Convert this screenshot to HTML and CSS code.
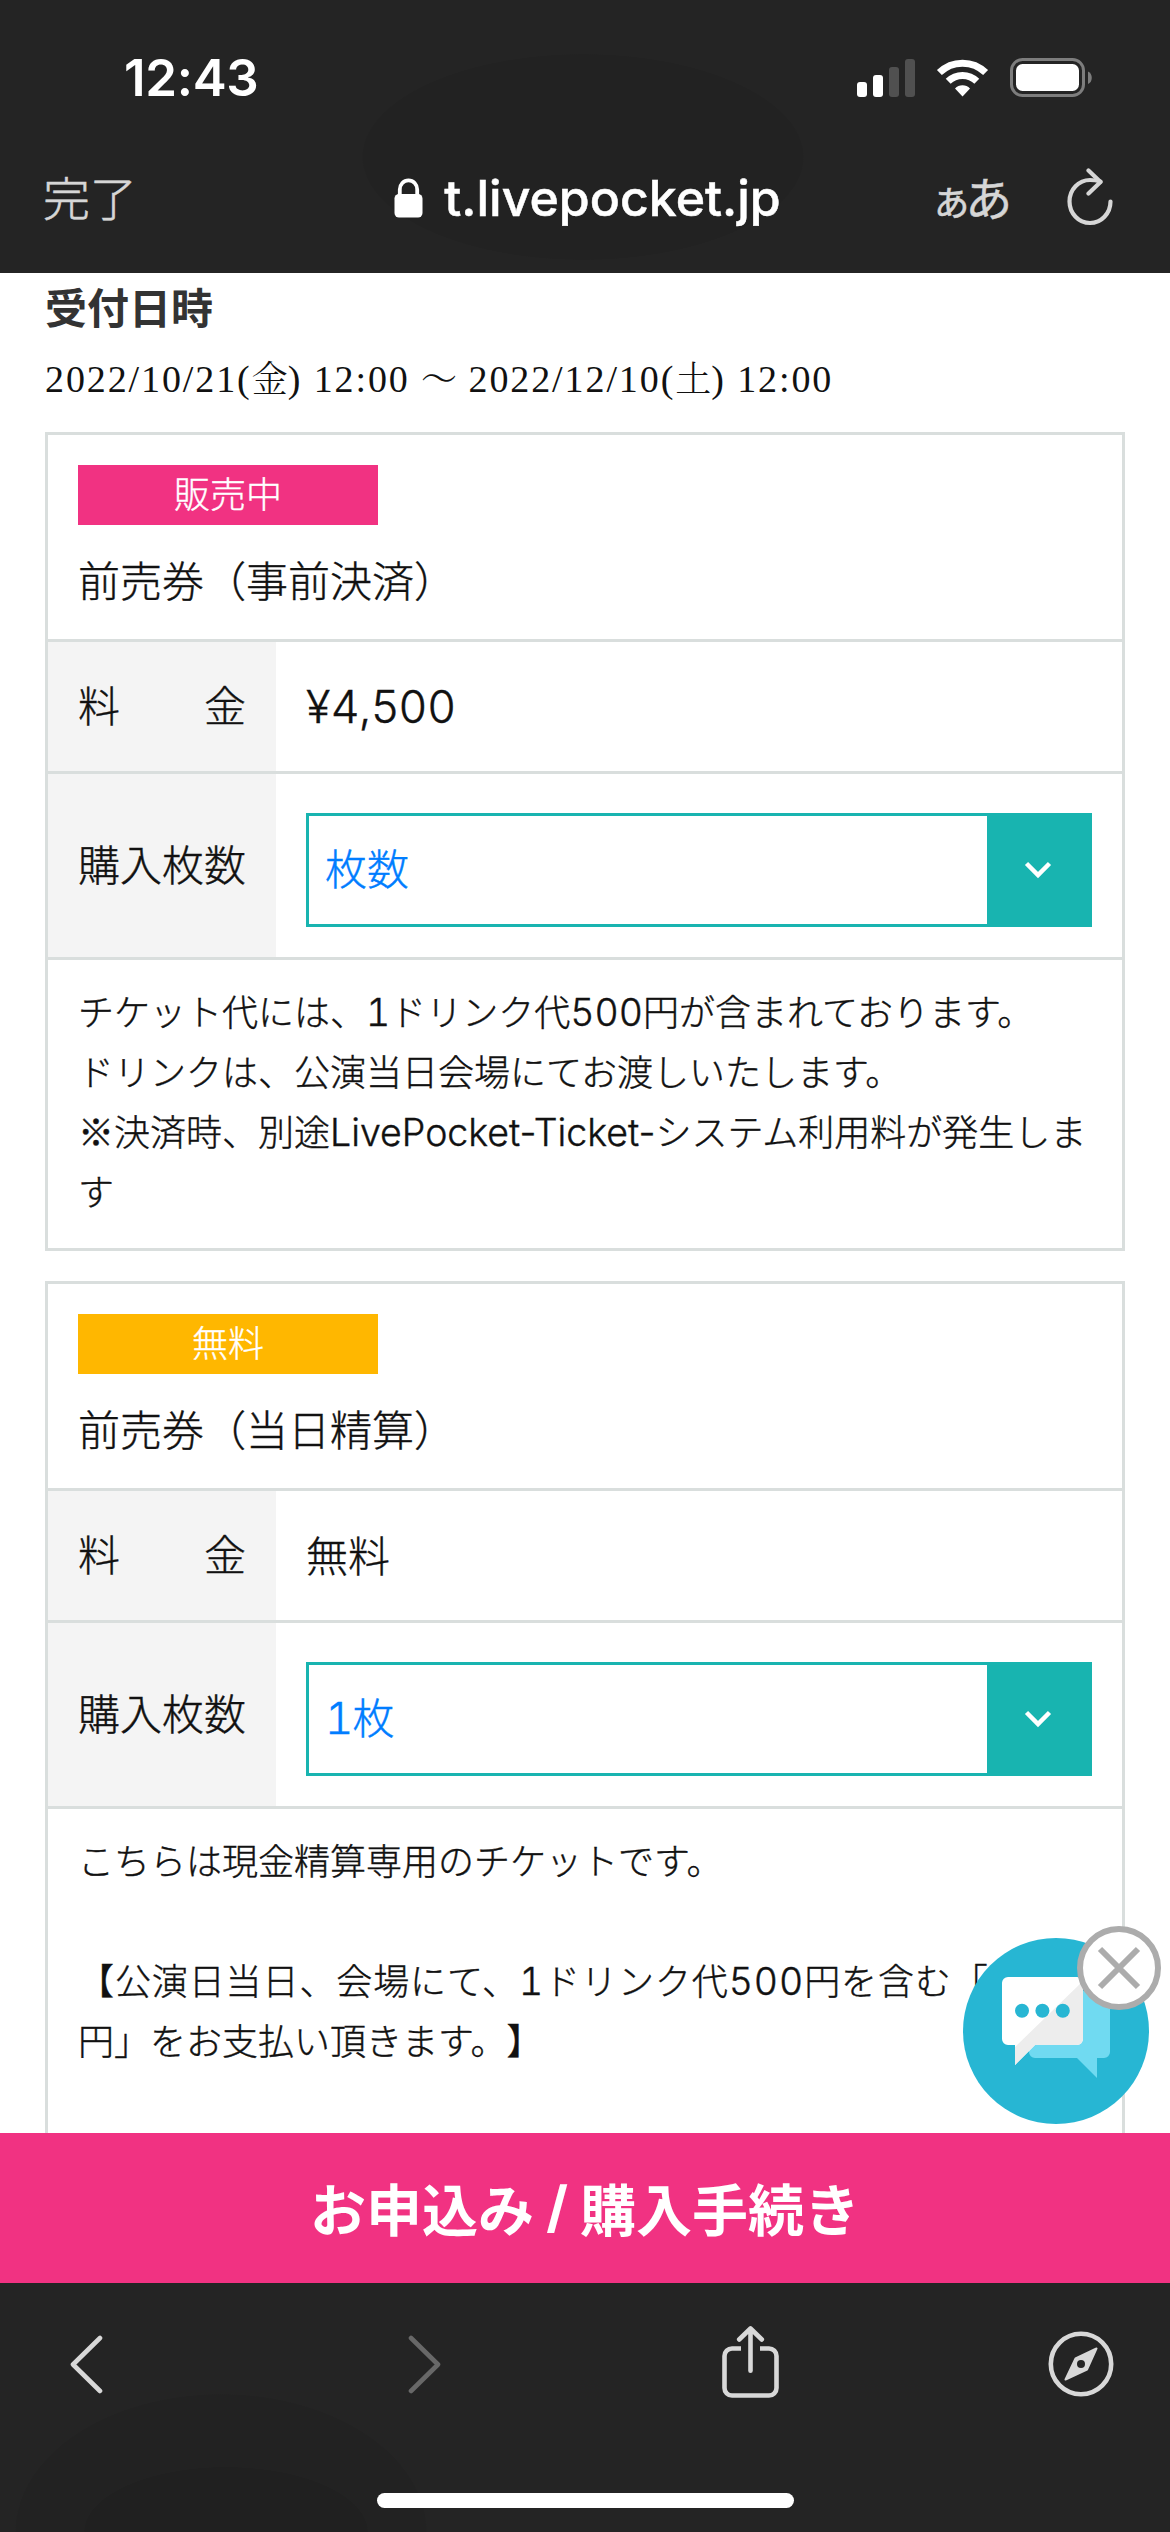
FILE: index.html
```html
<!DOCTYPE html>
<html lang="ja">
<head>
<meta charset="utf-8">
<title>t.livepocket.jp</title>
<link rel="stylesheet" href="styles.css">
</head>
<body>
<header class="browser-top">
  <div class="status-bar">
    <span class="clock">12:43</span>
    <svg class="status-icons" width="236" height="40" viewBox="0 0 236 40">
      <g fill="#fff">
        <rect x="1" y="24" width="10" height="15" rx="3"/>
        <rect x="17" y="17" width="10" height="22" rx="3"/>
        <rect x="33" y="9" width="10" height="30" rx="3" fill="#505050"/>
        <rect x="49" y="1" width="10" height="38" rx="3" fill="#505050"/>
      </g>
      <g fill="none" stroke="#fff" stroke-width="7">
        <path d="M83.4 14.6a33 33 0 0 1 46.2 0"/>
        <path d="M92.2 23.3a20.4 20.4 0 0 1 28.6 0"/>
      </g>
      <path d="M106.500 38.500L99 30.500a10.500 10.500 0 0 1 15 0z" fill="#fff"/>
      <rect x="155.500" y="1.500" width="72" height="36" rx="11" fill="none" stroke="#7d7d7d" stroke-width="3"/>
      <rect x="160" y="6" width="63" height="27" rx="6.500" fill="#fff"/>
      <path d="M232 13.500c5 1.500 5 11 0 12.500z" fill="#7d7d7d"/>
    </svg>
  </div>
  <div class="address-bar">
    <span class="done">完了</span>
    <div class="site">
      <svg width="29" height="40" viewBox="0 0 29 40">
        <path d="M5.800 18v-6.500a8.700 9.200 0 0 1 17.400 0V18" fill="none" stroke="#fff" stroke-width="3.800"/>
        <rect x="0.500" y="16" width="28" height="23.500" rx="4.500" fill="#fff"/>
      </svg>
      <span class="host">t.livepocket.jp</span>
    </div>
    <span class="reader"><span class="reader-small">ぁ</span><span>あ</span></span>
    <svg class="reload" width="48" height="58" viewBox="0 0 48 58" fill="none" stroke="#d6d6d6" stroke-width="4.200" stroke-linecap="round" stroke-linejoin="round">
      <path d="M44.500 33.500a20.500 21.500 0 1 1-20.500-21.500q5 0 10.500 1.500"/>
      <path d="M22.500 2.500l12 11.500-12 11.500"/>
    </svg>
  </div>
</header>

<main class="page">
  <h2 class="period-title">受付日時</h2>
  <p class="period">2022/10/21(<span class="day">金</span>) 12:00 <span class="tilde">〜</span> 2022/12/10(<span class="day">土</span>) 12:00</p>

  <section class="ticket">
    <div class="ticket-head">
      <span class="badge badge-sale">販売中</span>
      <h3 class="ticket-name">前売券（事前決済）</h3>
    </div>
    <div class="row">
      <div class="label"><span>料</span><span>金</span></div>
      <div class="value price">¥4,500</div>
    </div>
    <div class="row">
      <div class="label"><span>購入枚数</span></div>
      <div class="value">
        <div class="select"><span class="choice">枚数</span>
          <span class="arrow"><svg width="28" height="18" viewBox="0 0 28 18"><path d="M2.500 2.500L14 14L25.500 2.500" fill="none" stroke="#fff" stroke-width="4.500"/></svg></span>
        </div>
      </div>
    </div>
    <p class="note">チケット代には、<span class="lat">1</span>ドリンク代<span class="lat">500</span>円が含まれております。<br>ドリンクは、公演当日会場にてお渡しいたします。<br>※決済時、別途<span class="lat word">LivePocket-Ticket-</span>システム利用料が発生しま<br>す</p>
  </section>

  <section class="ticket">
    <div class="ticket-head">
      <span class="badge badge-free">無料</span>
      <h3 class="ticket-name">前売券（当日精算）</h3>
    </div>
    <div class="row">
      <div class="label"><span>料</span><span>金</span></div>
      <div class="value">無料</div>
    </div>
    <div class="row">
      <div class="label"><span>購入枚数</span></div>
      <div class="value">
        <div class="select"><span class="choice"><span class="count">1</span>枚</span>
          <span class="arrow"><svg width="28" height="18" viewBox="0 0 28 18"><path d="M2.500 2.500L14 14L25.500 2.500" fill="none" stroke="#fff" stroke-width="4.500"/></svg></span>
        </div>
      </div>
    </div>
    <p class="note note-long">こちらは現金精算専用のチケットです。<br><br><span class="spread">【公演日当日、会場にて、<span class="lat">1</span>ドリンク代<span class="lat">500</span>円を含む「</span><br>円」をお支払い頂きます。】</p>
  </section>

  <svg class="chat" width="201" height="200" viewBox="960 1925 201 200">
    <circle cx="1056" cy="2031" r="93" fill="#27b6d3"/>
    <path d="M1035 1991h69a6 6 0 0 1 6 6v55a6 6 0 0 1-6 6h-7v20l-20-20h-42a6 6 0 0 1-6-6v-55a6 6 0 0 1 6-6z" fill="#70daf1"/>
    <path d="M1008 1977h69a6 6 0 0 1 6 6v56a6 6 0 0 1-6 6h-42l-20 20v-20h-7a6 6 0 0 1-6-6v-56a6 6 0 0 1 6-6z" fill="#fff"/>
    <path d="M1083 1981v58a6 6 0 0 1-6 6h-42l-20 20v-18z" fill="#ededed"/>
    <g fill="#27b6d3"><circle cx="1022" cy="2010.700" r="7"/><circle cx="1042.400" cy="2010.700" r="7"/><circle cx="1062.800" cy="2010.700" r="7"/></g>
    <circle cx="1119" cy="1968" r="39" fill="#fff" stroke="#acacac" stroke-width="6"/>
    <path d="M1100 1949l38 38M1138 1949l-38 38" stroke="#acacac" stroke-width="6"/>
  </svg>
</main>

<div class="apply">お申込み<span class="slash">/</span>購入手続き</div>

<footer class="browser-bottom">
  <nav class="toolbar">
    <svg width="36" height="60" viewBox="0 0 36 60" fill="none" stroke="#d8d8d8" stroke-width="4.600" stroke-linecap="round" stroke-linejoin="round"><path d="M31 4L4 30.500L31 57"/></svg>
    <svg width="36" height="60" viewBox="0 0 36 60" fill="none" stroke="#686868" stroke-width="4.600" stroke-linecap="round" stroke-linejoin="round"><path d="M4 4L31 30.500L4 57"/></svg>
    <svg class="share" width="62" height="76" viewBox="0 0 62 76" fill="none" stroke="#d8d8d8" stroke-width="4.600" stroke-linecap="round" stroke-linejoin="round">
      <path d="M21 24.500H12a7.500 7.500 0 0 0-7.500 7.500V64a7.500 7.500 0 0 0 7.500 7.500h37a7.500 7.500 0 0 0 7.500-7.500V32a7.500 7.500 0 0 0-7.500-7.500H40" stroke-linecap="butt"/>
      <path d="M30.500 46.700V5M19.200 15.500L30.500 4.500L41.800 15.500"/>
    </svg>
    <svg width="68" height="68" viewBox="0 0 68 68">
      <circle cx="34" cy="34" r="30.200" fill="none" stroke="#d8d8d8" stroke-width="4.600"/>
      <path d="M49.500 18.500L40 39.500L18.500 49.500L28.500 28.500z" fill="#d8d8d8" stroke="#d8d8d8" stroke-width="2" stroke-linejoin="round"/>
      <circle cx="34" cy="34" r="4" fill="#242424"/>
    </svg>
  </nav>
  <div class="home-indicator"></div>
</footer>
</body>
</html>
```
FILE: styles.css
```css
* { box-sizing: border-box; }

body {
  margin: 0;
  width: 1170px;
  height: 2532px;
  overflow: hidden;
  display: flex;
  flex-direction: column;
  background: #fff;
  color: #111;
  font-family: "Noto Sans CJK JP", sans-serif;
  font-weight: 300;
  text-spacing-trim: space-all;
}

h2, h3, p { margin: 0; }
svg { display: block; flex: none; }

/* browser chrome, top */
.browser-top {
  height: 273px;
  flex: none;
  color: #fff;
  background: radial-gradient(ellipse 221px 103px at 583px 157px, #222 99.5%, transparent 100%) #242424;
}
.status-bar {
  height: 156px;
  padding: 0 78px 0 124px;
  display: flex;
  justify-content: space-between;
  align-items: center;
}
.clock { font: 600 51px/60px Inter, sans-serif; letter-spacing: -0.3px; }
.address-bar {
  height: 84px;
  padding: 0 56px 0 43px;
  display: flex;
  align-items: center;
}
.done { width: 352px; height: 65px; font-size: 47px; line-height: 60px; color: #d6d6d6; -webkit-text-stroke: 0.5px; }
.site { width: 542px; display: flex; align-items: center; gap: 21px; }
.host { font: 500 50px/60px Inter, sans-serif; white-space: nowrap; -webkit-text-stroke: 0.5px; }
.reader {
  width: 131px;
  height: 64px;
  display: flex;
  align-items: baseline;
  color: #d6d6d6;
  font-size: 47px;
  line-height: 60px;
  font-weight: 400;
  -webkit-text-stroke: 0.5px;
}
.reader-small { font-size: 42px; letter-spacing: -7px; margin-left: -5px; }
.reload { margin-top: -2px; }

/* page */
.page {
  position: relative;
  height: 1860px;
  flex: none;
  overflow: hidden;
  padding: 0 45px;
}
.period-title {
  height: 72px;
  font-size: 42px;
  line-height: 66px;
  font-weight: 700;
  color: #333;
}
.period {
  height: 87px;
  font: 400 38px/68px "Liberation Serif", "Noto Serif CJK JP", "Noto Sans CJK JP", serif;
  letter-spacing: 1.9px;
  white-space: nowrap;
}
.day, .tilde { font-size: 36px; font-weight: 300; letter-spacing: 0; line-height: 1; }

.ticket {
  border: 3px solid #d9dedd;
  margin-bottom: 30px;
  -webkit-text-stroke: 0.4px;
}
.ticket-head { height: 204px; padding: 30px; }
.badge {
  display: block;
  width: 300px;
  height: 60px;
  color: #fff;
  font-size: 36px;
  line-height: 55px;
  text-align: center;
}
.badge-sale { background: #f13282; }
.badge-free { background: #ffb700; }
.ticket-name { margin-top: 24px; font-size: 42px; line-height: 60px; font-weight: 300; }
.row {
  display: grid;
  grid-template-columns: 228px 1fr;
  border-top: 3px solid #d9dedd;
  font-size: 42px;
  line-height: 60px;
}
.label {
  padding: 0 30px 5px;
  background: #f4f4f4;
  display: flex;
  justify-content: space-between;
  align-items: center;
}
.value { padding: 33px 30px 36px; }
.value:has(.select) { padding: 39px 30px 30px; }
.value.price {
  padding: 35px 30px 34px;
  font-family: Inter, sans-serif;
  font-size: 45px;
  letter-spacing: 0.8px;
}
.select {
  height: 114px;
  border: 3px solid #18b4b0;
  display: flex;
  justify-content: space-between;
  align-items: center;
  color: #007dff;
}
.choice { padding: 0 0 7px 16px; }
.count { font: 300 44px/1 Inter, sans-serif; font-feature-settings: "tnum"; letter-spacing: -1px; }
.arrow {
  width: 102px;
  height: 100%;
  background: #18b4b0;
  display: flex;
  justify-content: center;
  align-items: center;
}
.note {
  padding: 20px 30px 28px;
  border-top: 3px solid #d9dedd;
  font-size: 36px;
  line-height: 60px;
  white-space: nowrap;
}
.note-long { padding-bottom: 88px; }
.lat { font: 300 37.500px/1 Inter, sans-serif; font-feature-settings: "tnum"; }
.lat.word { font-feature-settings: normal; }
.spread { letter-spacing: 0.9px; }

.chat { position: absolute; left: 960px; top: 1652px; }

/* purchase button */
.apply {
  height: 150px;
  flex: none;
  background: #f13282;
  color: #fff;
  display: flex;
  justify-content: center;
  font-size: 56px;
  line-height: 148px;
  font-weight: 700;
}
.slash { width: 46px; text-align: center; font-family: Inter, sans-serif; }

/* browser chrome, bottom */
.browser-bottom {
  flex: 1;
  background:
    radial-gradient(ellipse 142px 65px at 226px 249px, #202020 99.5%, transparent 100%),
    radial-gradient(ellipse 206px 138px at 221px 249px, #222 99.5%, transparent 100%),
    #242424;
}
.toolbar {
  height: 162px;
  padding: 0 55px 0 69px;
  display: grid;
  grid-template-columns: 338px 313px 327px 68px;
  align-items: center;
}
.share { margin-top: -4px; }
.home-indicator {
  width: 417px;
  height: 15px;
  margin: 48px auto 0;
  border-radius: 8px;
  background: #fff;
}
```
